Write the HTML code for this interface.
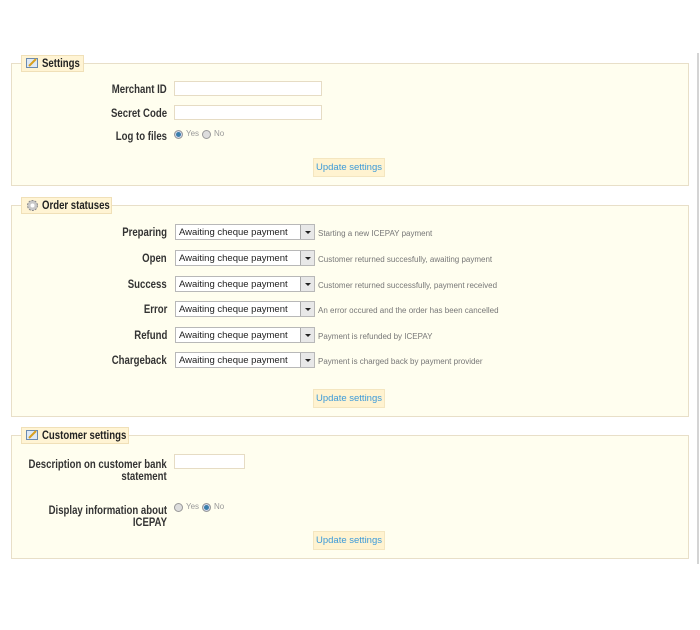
<!DOCTYPE html>
<html><head><meta charset="utf-8"><style>
body{margin:0;width:700px;height:630px;background:#fff;position:relative;overflow:hidden;font-family:"Liberation Sans",Arial,sans-serif;}
.a{position:absolute}
.box{position:absolute;left:11px;width:676px;background:#fffeef;border:1px solid #e8dfc8;}
.leg{position:absolute;left:21px;height:15px;background:#fff4d4;border:1px solid #f0e0b8;font-size:12px;font-weight:bold;color:#222;line-height:15px;}
.leg svg{position:absolute;left:4px;top:1px}
.leg span{display:inline-block;transform:scaleX(0.8);transform-origin:left;white-space:nowrap}
.lbl{position:absolute;right:533px;font-size:12px;font-weight:bold;color:#333;text-align:right;line-height:11px;transform:scaleX(0.8);transform-origin:right;white-space:nowrap}
.inp{position:absolute;left:174px;height:13px;background:#fff;border:1px solid #e6dcc4;}
.btn{position:absolute;left:313px;width:70px;height:17px;background:#fff3d0;border:1px solid #f4e6c0;color:#3c9ad8;font-size:9.5px;line-height:17px;text-align:center;}
.sel{position:absolute;left:175px;width:138px;height:14px;background:#fff;border:1px solid #b8b8b8;font-size:9.5px;color:#222;line-height:15px;text-indent:3px;}
.sel i{position:absolute;right:0;top:0;width:13px;height:14px;background:#e8e8e8;border-left:1px solid #aaa}
.sel i:after{content:"";position:absolute;left:4px;top:6px;border-left:3px solid transparent;border-right:3px solid transparent;border-top:3px solid #222}
.help{position:absolute;left:318px;font-size:8px;color:#777;line-height:10px}
.rad{position:absolute;width:7px;height:7px;border-radius:50%;border:1px solid #999;background:#ddd}
.rad.on{background:#3a7eab;box-shadow:inset 0 0 0 1px #dde}
.rt{position:absolute;font-size:8px;color:#999;line-height:9px}
</style></head><body>
<div class="a" style="left:697px;top:53px;width:2px;height:511px;background:#d4d4d4"></div>

<div class="box" style="top:63px;height:121px"></div>
<div class="leg" style="top:55px;width:61px"><svg width="13" height="12"><rect x="0.5" y="1.5" width="11" height="9" fill="#dfe9f5" stroke="#6a8ab0"/><path d="M3 9 L10 2" stroke="#d8a020" stroke-width="2"/></svg><span style="margin-left:20px">Settings</span></div>
<div class="lbl" style="top:84px">Merchant ID</div><div class="inp" style="top:81px;width:146px"></div>
<div class="lbl" style="top:108px">Secret Code</div><div class="inp" style="top:105px;width:146px"></div>
<div class="lbl" style="top:131px">Log to files</div>
<div class="rad on" style="left:174px;top:130px"></div><div class="rt" style="left:186px;top:129px">Yes</div>
<div class="rad" style="left:202px;top:130px"></div><div class="rt" style="left:214px;top:129px">No</div>
<div class="btn" style="top:158px">Update settings</div>

<div class="box" style="top:205px;height:210px"></div>
<div class="leg" style="top:197px;width:89px"><svg width="13" height="13"><circle cx="6.5" cy="6.5" r="5" fill="#c8c8c8" stroke="#888" stroke-dasharray="2 1.2"/><circle cx="6.5" cy="6.5" r="2" fill="#fff"/></svg><span style="margin-left:20px">Order statuses</span></div>
<div class="lbl" style="top:227px">Preparing</div><div class="sel" style="top:224px">Awaiting cheque payment<i></i></div><div class="help" style="top:229px">Starting a new ICEPAY payment</div>
<div class="lbl" style="top:253px">Open</div><div class="sel" style="top:250px">Awaiting cheque payment<i></i></div><div class="help" style="top:255px">Customer returned succesfully, awaiting payment</div>
<div class="lbl" style="top:279px">Success</div><div class="sel" style="top:276px">Awaiting cheque payment<i></i></div><div class="help" style="top:281px">Customer returned successfully, payment received</div>
<div class="lbl" style="top:304px">Error</div><div class="sel" style="top:301px">Awaiting cheque payment<i></i></div><div class="help" style="top:306px">An error occured and the order has been cancelled</div>
<div class="lbl" style="top:330px">Refund</div><div class="sel" style="top:327px">Awaiting cheque payment<i></i></div><div class="help" style="top:332px">Payment is refunded by ICEPAY</div>
<div class="lbl" style="top:355px">Chargeback</div><div class="sel" style="top:352px">Awaiting cheque payment<i></i></div><div class="help" style="top:357px">Payment is charged back by payment provider</div>
<div class="btn" style="top:389px">Update settings</div>

<div class="box" style="top:435px;height:122px"></div>
<div class="leg" style="top:427px;width:106px"><svg width="13" height="12"><rect x="0.5" y="1.5" width="11" height="9" fill="#dfe9f5" stroke="#6a8ab0"/><path d="M3 9 L10 2" stroke="#d8a020" stroke-width="2"/></svg><span style="margin-left:20px">Customer settings</span></div>
<div class="lbl" style="top:458px;line-height:12px">Description on customer bank<br>statement</div><div class="inp" style="top:454px;width:69px"></div>
<div class="lbl" style="top:504px;line-height:12px">Display information about<br>ICEPAY</div>
<div class="rad" style="left:174px;top:503px"></div><div class="rt" style="left:186px;top:502px">Yes</div>
<div class="rad on" style="left:202px;top:503px"></div><div class="rt" style="left:214px;top:502px">No</div>
<div class="btn" style="top:531px">Update settings</div>
</body></html>
